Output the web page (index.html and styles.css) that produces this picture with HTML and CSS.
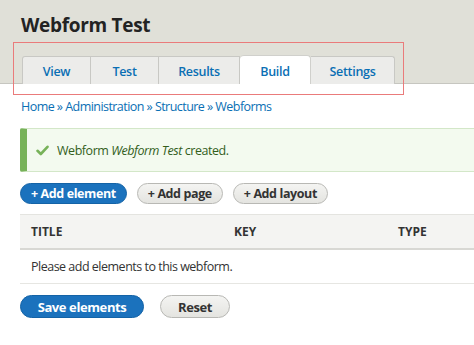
FILE: index.html
```html
<!DOCTYPE html>
<html>
<head>
<meta charset="utf-8">
<link rel="stylesheet" href="styles.css">
</head>
<body>
<header class="page-header">
  <h1 class="page-title">Webform Test</h1>
  <div class="tabs-frame">
    <ul class="tabs">
      <li class="tab"><a href="#">View</a></li>
      <li class="tab"><a href="#">Test</a></li>
      <li class="tab"><a href="#">Results</a></li>
      <li class="tab active"><a href="#">Build</a></li>
      <li class="tab"><a href="#">Settings</a></li>
    </ul>
  </div>
</header>
<main class="content">
  <nav class="breadcrumb">
    <a href="#">Home</a> » <a href="#">Administration</a> » <a href="#">Structure</a> » <a href="#">Webforms</a>
  </nav>
  <div class="message">
    <svg class="check" width="13" height="11" viewBox="0 0 13 11"><path d="M1.5 5.8 L4.8 9 L11.5 1.8" fill="none" stroke="#77b259" stroke-width="2.6" stroke-linecap="round" stroke-linejoin="round"/></svg>
    <span>Webform <em>Webform Test</em> created.</span>
  </div>
  <div class="actions">
    <a class="btn btn-primary btn-small" href="#">+ Add element</a>
    <a class="btn btn-small" href="#">+ Add page</a>
    <a class="btn btn-small" href="#">+ Add layout</a>
  </div>
  <table class="elements">
    <thead>
      <tr><th class="c-title">Title</th><th class="c-key">Key</th><th class="c-type">Type</th></tr>
    </thead>
    <tbody>
      <tr><td colspan="3">Please add elements to this webform.</td></tr>
    </tbody>
  </table>
  <div class="form-actions">
    <a class="btn btn-primary" href="#">Save elements</a>
    <a class="btn" href="#">Reset</a>
  </div>
</main>
</body>
</html>
```
FILE: styles.css
```css
html, body {
  margin: 0;
  padding: 0;
  overflow: hidden;
  background: #fff;
}
body {
  font-family: "Open Sans", "DejaVu Sans", sans-serif;
  color: #222;
  width: 474px;
  height: 345px;
  letter-spacing: -0.5px;
}
a { text-decoration: none; }

.page-header {
  background: #e0e0d8;
  border-bottom: 1px solid #c6c6c0;
  padding: 12px 0 0 13px;
  height: 71px;
}
.page-title {
  margin: 0 0 0 8px;
  font-size: 19px;
  font-weight: bold;
  color: #232323;
  line-height: 26px;
  letter-spacing: -0.3px;
}
.tabs-frame {
  margin-top: 4px;
  width: 391px;
  height: 53px;
  border: 1.5px solid #ea7b7b;
  box-sizing: border-box;
  padding: 13px 0 0 8px;
}
.tabs {
  list-style: none;
  margin: 0;
  padding: 0;
  display: flex;
  height: 28px;
}
.tab {
  background: #ececea;
  border: 1px solid #c8c8c4;
  border-left: none;
  border-bottom: none;
  box-sizing: border-box;
  height: 28px;
  display: flex;
  align-items: center;
  justify-content: center;
}
.tab:first-child { border-left: 1px solid #c8c8c4; border-top-left-radius: 3px; }
.tab:last-child { border-top-right-radius: 3px; }
.tab a {
  color: #0a6fb4;
  font-size: 12.5px;
  font-weight: 600;
  padding-top: 2px;
  letter-spacing: -0.3px;
}
.tab:nth-child(1) { width: 69px; }
.tab:nth-child(2) { width: 68px; }
.tab:nth-child(3) { width: 81px; }
.tab:nth-child(4) { width: 71px; }
.tab:nth-child(5) { width: 84px; }
.tab.active {
  background: #fff;
  height: 29px;
  margin-top: -1px;
  border-radius: 4px 4px 0 0;
  border-color: #d0d0cc;
}

.content {
  padding: 0 0 0 20px;
  width: 560px;
}
.breadcrumb {
  margin: 14px 0 0 1px;
  font-size: 12.5px;
  line-height: 17px;
  color: #0a6fb4;
  letter-spacing: -0.55px;
}
.breadcrumb a { color: #0a6fb4; }

.message {
  margin-top: 13px;
  height: 44px;
  box-sizing: border-box;
  background: #f3faef;
  border: 1px solid #d3e7c8;
  border-left: 7px solid #77b259;
  border-radius: 2px;
  display: flex;
  align-items: center;
  padding-left: 9px;
  font-size: 12.5px;
  color: #325e1c;
  letter-spacing: -0.45px;
}
.message .check { margin-right: 8px; }
.message em { font-style: italic; }

.actions {
  display: flex;
  gap: 10px;
  margin-top: 11px;
}
.btn {
  display: inline-flex;
  align-items: center;
  justify-content: center;
  box-sizing: border-box;
  border-radius: 20px;
  font-weight: bold;
  font-size: 12.5px;
  color: #333;
  background: linear-gradient(#f4f4f2, #e4e4e0);
  border: 1px solid #b8b8b4;
  height: 23px;
  padding: 0 15px;
  white-space: nowrap;
  letter-spacing: -0.4px;
}
.btn-small { height: 21px; padding: 0 10px; }
.btn-primary {
  background: #1b72bd;
  border-color: #1463a6;
  color: #fff;
}

.elements {
  margin-top: 10px;
  border-collapse: collapse;
  width: 560px;
  font-size: 12.5px;
}
.elements th {
  text-align: left;
  text-transform: uppercase;
  font-weight: bold;
  color: #333;
  background: #f4f4f2;
  border-top: 1px solid #e4e4e0;
  border-bottom: 2px solid #d8d8d4;
  height: 33px;
  padding: 0 0 0 11px;
  font-size: 12px;
  letter-spacing: 0;
}
.c-title { width: 192px; }
.c-key { width: 153px; }
.elements td {
  padding: 0 0 0 11px;
  height: 33px;
  border-bottom: 1px solid #e6e6e2;
  color: #333;
  letter-spacing: -0.5px;
}

.form-actions {
  display: flex;
  gap: 16px;
  margin-top: 11px;
}
.form-actions .btn { font-size: 13px; }
.form-actions .btn-primary { width: 124px; }
.form-actions .btn:not(.btn-primary) { width: 70px; }
```
